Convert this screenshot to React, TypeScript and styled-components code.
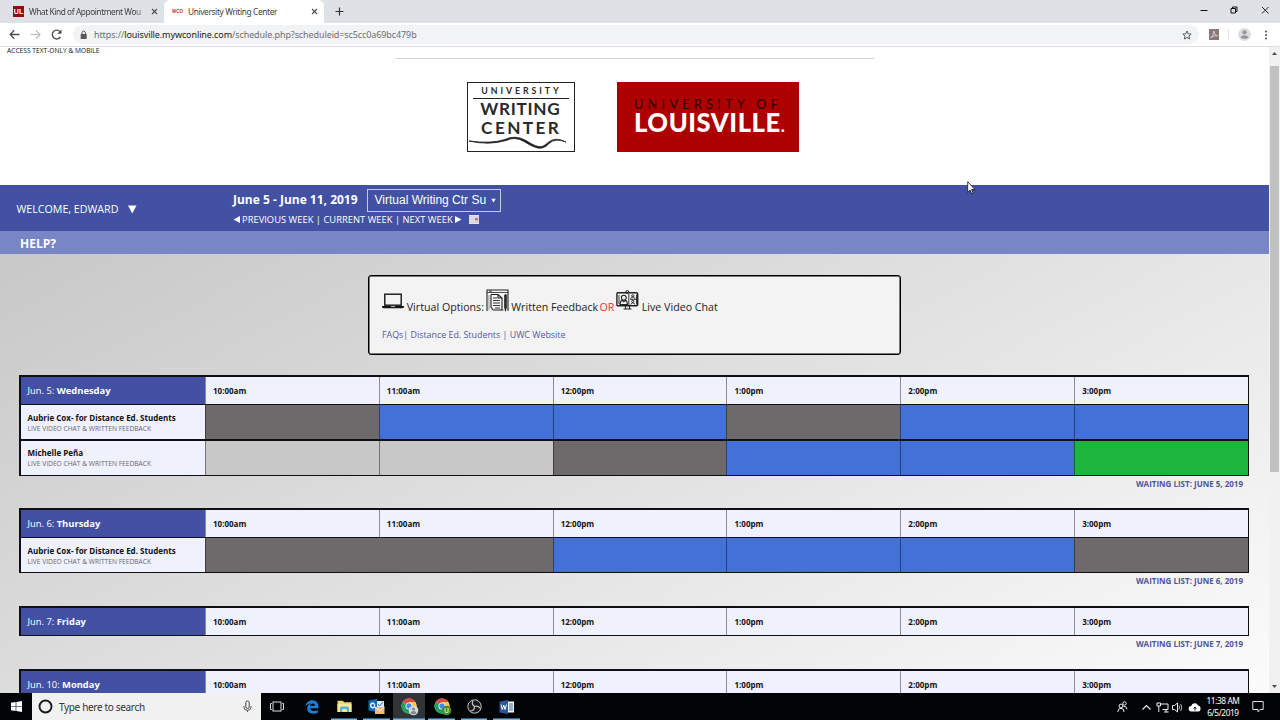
import React from 'react';
import styled, { createGlobalStyle } from 'styled-components';

const Global = createGlobalStyle`
  * { box-sizing: border-box; }
  body { margin: 0; overflow: hidden; font-family: "Open Sans", "Noto Sans", sans-serif; color: #111; }
`;

const Screen = styled.div`
  position: relative;
  width: 1280px;
  height: 720px;
  display: flex;
  flex-direction: column;
  overflow: hidden;
  background: #fff;
`;

/* Browser chrome */
const TabStrip = styled.div`
  height: 23px;
  flex: none;
  display: flex;
  align-items: stretch;
  background: #dee1e6;
`;
const Tab = styled.div<{ $active?: boolean; $width: number }>`
  width: ${p => p.$width}px;
  display: flex;
  align-items: center;
  padding: 0 6px 0 ${p => (p.$active ? 8 : 13)}px;
  background: ${p => (p.$active ? '#fff' : 'transparent')};
  border-radius: 6px 6px 0 0;
  font: 8.3px "Noto Sans", sans-serif;
  color: #3c3f43;
`;
const TabTitle = styled.span<{ $fade?: boolean }>`
  flex: 1;
  overflow: hidden;
  white-space: nowrap;
  letter-spacing: ${p => (p.$fade ? -0.42 : -0.36)}px;
  ${p => p.$fade && 'mask-image: linear-gradient(to right, #000 88%, rgba(0, 0, 0, 0.25) 100%);'}
  margin: 0 ${p => (p.$fade ? 3 : 6)}px 0 5px;
`;
const Favicon = styled.span<{ $plain?: boolean }>`
  width: 11px;
  height: 11px;
  display: grid;
  place-items: center;
  white-space: nowrap;
  background: ${p => (p.$plain ? 'transparent' : '#8c1014')};
  color: ${p => (p.$plain ? '#c8303c' : '#fff')};
  font: bold ${p => (p.$plain ? 4.5 : 7)}px "Liberation Sans", sans-serif;
`;
const NewTab = styled.div`
  display: flex;
  align-items: center;
  padding-left: 11px;
  flex: 1;
`;
const WindowButtons = styled.div`
  display: flex;
  align-items: center;
  gap: 22.5px;
  padding: 0 11.5px 4px 0;
`;
const Toolbar = styled.div`
  height: 24px;
  flex: none;
  display: flex;
  align-items: center;
  padding: 0 9px 0 8px;
  border-bottom: 1.5px solid #dcdde0;
  background: #fff;
`;
const NavButtons = styled.div`
  display: flex;
  gap: 8px;
  width: 65px;
`;
const AddressBar = styled.div`
  width: 1126px;
  height: 19px;
  display: flex;
  align-items: center;
  border-radius: 10px;
  background: #f1f3f4;
  padding: 0 7px 0 6px;
`;
const Url = styled.span`
  flex: 1;
  margin-left: 6px;
  font: 9px "Noto Sans", sans-serif;
  letter-spacing: -0.1px;
  color: #6d7175;
  b { font-weight: 400; color: #1e2022; }
`;
const Extensions = styled.div`
  flex: 1;
  display: flex;
  align-items: center;
  gap: 9px;
  padding-left: 10px;
  svg:last-child { margin-left: 4px; }
`;
const Divider = styled.span`
  width: 1px;
  height: 11px;
  background: #e2e4e6;
`;

/* Page */
const Viewport = styled.div`
  height: 646px;
  flex: none;
  display: flex;
  overflow: hidden;
`;
const Page = styled.main`
  width: 1269px;
  height: 646px;
  overflow: hidden;
  display: flex;
  flex-direction: column;
`;
const Scrollbar = styled.div`
  width: 11px;
  display: flex;
  flex-direction: column;
  align-items: center;
  justify-content: space-between;
  background: #f1f1f1;
  padding: 5px 0;
`;
const Thumb = styled.div`
  width: 9px;
  height: 406px;
  margin: 11px 0 auto;
  background: #c1c1c1;
`;
const Header = styled.header`
  height: 138px;
  flex: none;
  display: flex;
  flex-direction: column;
  align-items: center;
  overflow: hidden;
`;
const AccessLink = styled.div`
  align-self: flex-start;
  height: 11px;
  margin-left: 7px;
  font-size: 6.67px;
  line-height: 7px;
  color: #111;
`;
const Rule = styled.div`
  width: 478px;
  height: 1px;
  flex: none;
  background: #d2d2d2;
`;
const Logos = styled.div`
  display: flex;
  gap: 42px;
  margin: 23px 3px 0 0;
`;
const CenterLogo = styled.div`
  width: 108px;
  height: 70px;
  border: 1.5px solid #222;
  color: #2a2a2a;
  display: flex;
  flex-direction: column;
  align-items: center;
  font-family: Lato, sans-serif;
  white-space: nowrap;
`;
const LogoLine = styled.div<{ $size: number; $spacing: number; $height: number }>`
  font-size: ${p => p.$size}px;
  line-height: ${p => p.$height}px;
  height: ${p => p.$height}px;
  letter-spacing: ${p => p.$spacing}px;
  margin-right: ${p => 2 - p.$spacing}px;
  font-weight: 700;
`;
const LogoRule = styled.div`
  width: 96px;
  height: 1px;
  background: #222;
`;
const SchoolLogo = styled.div`
  width: 182px;
  height: 70px;
  padding: 15px 0 0 17px;
  background: #ad0000;
  color: #fff;
  font-family: Lato, sans-serif;
  white-space: nowrap;
`;
const SchoolTop = styled.div`
  height: 14px;
  font-size: 12.5px;
  line-height: 15px;
  letter-spacing: 4.4px;
  color: #220203;
`;
const SchoolName = styled.div`
  font-size: 25.6px;
  line-height: 23px;
  font-weight: 900;
  letter-spacing: 0.55px;
  span { font-size: 17px; }
`;

const NavBar = styled.nav`
  height: 46px;
  flex: none;
  display: flex;
  background: #4351a5;
  color: #fff;
  white-space: nowrap;
`;
const Welcome = styled.div`
  width: 233px;
  display: flex;
  align-items: center;
  gap: 10px;
  padding: 2px 0 0 16.5px;
  font-size: 10.67px;
`;
const WeekPicker = styled.div`
  display: flex;
  flex-direction: column;
  padding-top: 3px;
`;
const WeekRow = styled.div`
  display: flex;
  align-items: center;
  height: 24px;
  gap: 9px;
`;
const WeekTitle = styled.span`
  font-size: 12px;
  font-weight: 700;
  width: 125px;
  margin-top: -1px;
`;
const Select = styled.div`
  width: 134px;
  height: 23px;
  display: flex;
  align-items: center;
  justify-content: space-between;
  padding: 0 4px 0 6.5px;
  border: 1px solid #c4c9ec;
  font: 12px "Liberation Sans", sans-serif;
`;
const WeekLinks = styled.div`
  display: flex;
  align-items: center;
  height: 15px;
  font-size: 9.33px;
`;
const LinkText = styled.span`
  width: 211px;
  margin: 0 2px 0 2px;
  letter-spacing: 0.03px;
`;
const HelpBar = styled.div`
  height: 23px;
  flex: none;
  padding-left: 20px;
  background: #7886c6;
  color: #fff;
  font-size: 12px;
  line-height: 25px;
  font-weight: 700;
`;
const Body = styled.section`
  flex: 1;
  display: flex;
  flex-direction: column;
  padding: 21px 20px 0 19px;
  background: linear-gradient(152deg, #c8c8c8, #fdfdfd);
`;
const InfoBox = styled.div`
  width: 533px;
  height: 80px;
  flex: none;
  align-self: center;
  margin: 0 0 20px 1px;
  padding: 13px;
  border: 1px solid #000;
  border-radius: 3px;
  box-shadow: inset 0 0 0 0.5px #000;
  background: #f3f3f3;
`;
const Options = styled.div`
  display: flex;
  align-items: flex-end;
  height: 23px;
  font-size: 10.67px;
  line-height: 16px;
  white-space: nowrap;
  svg { flex: none; }
`;
const OptionText = styled.span<{ $width: number; $red?: boolean }>`
  width: ${p => p.$width}px;
  color: ${p => (p.$red ? '#e0352b' : '#1c1c1c')};
  height: 13px;
`;
const Links = styled.div`
  margin-top: 15px;
  font-size: 8.9px;
  line-height: 16px;
  color: #4f5a9f;
`;

const DayGroup = styled.div<{ $height: number }>`
  height: ${p => p.$height}px;
  flex: none;
`;
const Day = styled.div`
  width: 1230px;
  border: solid #101014;
  border-width: 2px 1px 1px 2px;
`;
const Row = styled.div<{ $height: number; $line?: number }>`
  display: grid;
  grid-template-columns: 184px repeat(6, 1fr);
  height: ${p => p.$height}px;
  border-top: ${p => p.$line ?? 0}px solid #101014;
`;
const DayName = styled.div`
  padding-left: 6.5px;
  background: #4351a5;
  color: #fff;
  font-size: 9.4px;
  line-height: 27px;
`;
const fills = { head: '#eff1fd', busy: '#6e696b', open: '#4371d7', off: '#c8c8c8', mine: '#1eb53c' };
type Fill = keyof typeof fills;
const Slot = styled.div<{ $fill: Fill; $joined?: boolean }>`
  padding-left: 7px;
  border-left: 1px solid ${p => (p.$joined ? fills[p.$fill] : 'rgba(0, 0, 0, 0.42)')};
  background: ${p => fills[p.$fill]};
  font-size: 8px;
  line-height: 27px;
  font-weight: 700;
`;
const Tutor = styled.div<{ $top: number }>`
  padding: ${p => p.$top}px 0 0 6.5px;
  background: #eff1fd;
  font-size: 8px;
  line-height: 12px;
  font-weight: 700;
  white-space: nowrap;
`;
const TutorNote = styled.div`
  font-size: 6.67px;
  line-height: 9px;
  font-weight: 400;
  color: #66666e;
`;
const Waiting = styled.div`
  height: 15px;
  text-align: right;
  padding-right: 6px;
  font-size: 8px;
  line-height: 15px;
  font-weight: 700;
  color: #4f549c;
`;

/* Taskbar */
const Taskbar = styled.footer`
  height: 27px;
  flex: none;
  display: flex;
  background: #020406;
  color: #fff;
`;
const TaskCell = styled.div<{ $width?: number; $running?: boolean; $active?: boolean; $inset?: number }>`
  width: ${p => p.$width ?? 33}px;
  padding-left: ${p => p.$inset ?? 0}px;
  display: grid;
  place-items: center;
  background: ${p => (p.$active ? '#303437' : 'transparent')};
  box-shadow: ${p => (p.$running ? 'inset 0 -1.5px #76b9ed' : 'none')};
  margin: ${p => (p.$running && !p.$active ? '0 3px' : '0')};
`;
const SearchBox = styled.div`
  width: 229px;
  display: flex;
  align-items: center;
  gap: 6px;
  padding: 0 9px 0 6px;
  background: #f1f1f1;
  color: #333;
  font: 10px "Noto Sans", sans-serif;
  letter-spacing: -0.33px;
  span { flex: 1; }
`;
const Tray = styled.div`
  margin-left: auto;
  display: flex;
  align-items: center;
  padding-right: 16px;
`;
const Clock = styled.div`
  width: 40px;
  margin: 0 9px 0 0;
  text-align: center;
  font: 8.3px/12px "Noto Sans", sans-serif;
  letter-spacing: -0.4px;
  white-space: nowrap;
`;
const Cursor = styled.svg`
  position: absolute;
  left: 967px;
  top: 181px;
`;

const CloseIcon = () => (
  <svg width="7" height="7" viewBox="0 0 7 7"><path d="M1 1l5 5M6 1L1 6" stroke="#4a4d51" strokeWidth="1.1" /></svg>
);

const Laptop = () => (
  <svg width="22" height="19" viewBox="0 0 22 19">
    <rect x="2.8" y="1.2" width="16.400" height="11" fill="none" stroke="#151515" strokeWidth="1.4" />
    <path d="M0 13h8.500l1 .8h3l1-.8H22v1.200q-.6 1-2 1H2q-1.500 0-2-1z" fill="#151515" />
  </svg>
);
const Papers = () => (
  <svg width="23" height="23" viewBox="0 0 23 23" fill="none" stroke="#222">
    <path d="M1 22V1h21v21" strokeWidth="1.1" />
    <path d="M1 3.5h21M3 2.2h3" strokeWidth=".8" />
    <path d="M3 6v15M14.5 21h4" strokeWidth="1" stroke="#999" />
    <path d="M5 5.5h7l4 3.5v12H7M5 5.5V18l2 3M12 5.5V9h4" strokeWidth="1.1" />
    <path d="M7 9h4M7 11.5h7M7 14h7M7 16.5h7M9 19h5" strokeWidth=".9" />
    <path d="M18.8 6.5v12l.7 2.5.7-2.5v-12z" strokeWidth="1.2" fill="#555" />
    <path d="M18.7 6h1.8" strokeWidth="1.5" />
  </svg>
);
const VideoChat = () => (
  <svg width="23" height="22" viewBox="0 0 23 22" fill="none" stroke="#222">
    <rect x=".9" y="2.8" width="20.8" height="13" rx="1" strokeWidth="1.4" />
    <circle cx="11.3" cy="2" r="1.5" strokeWidth="1" />
    <path d="M12.8 4v11M14 9.3h6.600M3 5v9M20.500 4.500v10" strokeWidth=".9" />
    <circle cx="7.8" cy="7.7" r="2.4" strokeWidth="1.1" />
    <path d="M4 14.5q.2-3.500 2.300-4.200l1.500 1.500 1.500-1.500q2 .7 2.200 4.200z" strokeWidth="1.1" />
    <circle cx="16.8" cy="5.8" r="1.1" strokeWidth=".9" />
    <path d="M14.8 8.8q.3-1.800 2-1.800t2 1.800M14.800 14.600q.3-1.800 2-1.800t2 1.800" strokeWidth=".9" />
    <circle cx="16.8" cy="11.4" r="1.1" strokeWidth=".9" />
    <path d="M9.5 16v2.600M13.500 16v2.600M7.500 19h8" strokeWidth="1.1" />
  </svg>
);

const ChromeIcon = ({ badge }: { badge: 'person' | 'letter' }) => (
  <svg width="20" height="20" viewBox="-1 0 20 20">
    <circle cx="9" cy="9" r="7.5" fill="#e8e8e8" />
    <path d="M9 9L2.5 5.25A7.5 7.5 0 0 1 15.5 5.25H9z" fill="#dd4b3e" />
    <path d="M9 9L2.5 5.25A7.5 7.5 0 0 0 9 16.5l3.2-5.6z" fill="#1da261" />
    <path d="M9 5.25h6.5A7.5 7.5 0 0 1 9 16.5l3.3-5.6z" fill="#fbcc33" />
    <circle cx="9" cy="9" r="3.5" fill="#fff" />
    <circle cx="9" cy="9" r="2.7" fill="#4587f3" />
    <circle cx="13.5" cy="13.5" r="4.8" fill={badge === 'person' ? '#d5d8db' : '#3f8f2e'} />
    {badge === 'person' ? (
      <g fill="#808890"><circle cx="13.5" cy="12" r="1.6" /><path d="M10.5 16.2q.4-2.200 3-2.200t3 2.200q-3 2-6 0z" /></g>
    ) : (
      <text x="13.5" y="16" fontSize="7" textAnchor="middle" fill="#fff" fontFamily="Roboto, sans-serif">U</text>
    )}
  </svg>
);

const TIMES = ['10:00am', '11:00am', '12:00pm', '1:00pm', '2:00pm', '3:00pm'];
type TutorRow = { name: string; slots: Fill[]; joined?: number };
type DayData = { date: string; day: string; tutors: TutorRow[]; waiting?: string; height: number };
const AUBRIE = 'Aubrie Cox- for Distance Ed. Students';
const DAYS: DayData[] = [
  {
    date: 'Jun. 5:', day: 'Wednesday', waiting: 'JUNE 5, 2019', height: 133,
    tutors: [
      { name: AUBRIE, slots: ['busy', 'open', 'open', 'busy', 'open', 'open'] },
      { name: 'Michelle Peña', slots: ['off', 'off', 'busy', 'open', 'open', 'mine'] },
    ],
  },
  {
    date: 'Jun. 6:', day: 'Thursday', waiting: 'JUNE 6, 2019', height: 98,
    tutors: [{ name: AUBRIE, slots: ['busy', 'busy', 'open', 'open', 'open', 'busy'], joined: 1 }],
  },
  { date: 'Jun. 7:', day: 'Friday', waiting: 'JUNE 7, 2019', height: 63, tutors: [] },
  { date: 'Jun. 10:', day: 'Monday', height: 60, tutors: [] },
];

const Schedule = ({ data }: { data: DayData }) => (
  <DayGroup $height={data.height}>
    <Day>
      <Row $height={27}>
        <DayName>{data.date} <b>{data.day}</b></DayName>
        {TIMES.map(t => <Slot key={t} $fill="head">{t}</Slot>)}
      </Row>
      {data.tutors.map((t, i) => (
        <Row key={t.name} $height={i ? 36 : 35} $line={i ? 2 : 1}>
          <Tutor $top={i ? 6 : 7}>{t.name}<TutorNote>LIVE VIDEO CHAT &amp; WRITTEN FEEDBACK</TutorNote></Tutor>
          {t.slots.map((s, n) => <Slot key={n} $fill={s} $joined={n === t.joined} />)}
        </Row>
      ))}
    </Day>
    {data.waiting && <Waiting>WAITING LIST: {data.waiting}</Waiting>}
  </DayGroup>
);

export default function App() {
  return (
    <Screen>
      <Global />
      <TabStrip>
        <Tab $width={164}>
          <Favicon>UL</Favicon>
          <TabTitle $fade>What Kind of Appointment Wou</TabTitle>
          <CloseIcon />
        </Tab>
        <Tab $width={160} $active>
          <Favicon $plain>WCO</Favicon>
          <TabTitle>University Writing Center</TabTitle>
          <CloseIcon />
        </Tab>
        <NewTab>
          <svg width="9" height="9" viewBox="0 0 9 9"><path d="M4.5 .5v8M.5 4.5h8" stroke="#333" strokeWidth="1.2" /></svg>
        </NewTab>
        <WindowButtons>
          <svg width="8" height="8" viewBox="0 0 8 8"><path d="M.5 4.5h7" stroke="#111" /></svg>
          <svg width="8" height="8" viewBox="0 0 8 8"><path d="M1 2.5h4.5v4.5H1zM2.5 2.5V1H7v4.5H5.5" stroke="#111" fill="none" /></svg>
          <svg width="8" height="8" viewBox="0 0 8 8"><path d="M1 1l6.5 6.5M7.5 1L1 7.5" stroke="#222" /></svg>
        </WindowButtons>
      </TabStrip>

      <Toolbar>
        <NavButtons>
          <svg width="13" height="13" viewBox="0 0 13 13"><path d="M11.5 6.5H2.5M6.3 2.3L2.2 6.5l4.1 4.2" stroke="#4c4f53" strokeWidth="1.3" fill="none" /></svg>
          <svg width="13" height="13" viewBox="0 0 13 13"><path d="M1.8 6.5h9M6.9 2.3l4.1 4.2-4.1 4.2" stroke="#b5b7ba" strokeWidth="1.2" fill="none" /></svg>
          <svg width="13" height="13" viewBox="0 0 13 13"><path d="M10.4 9A4.4 4.4 0 1 1 10 3.6" stroke="#4c4f53" strokeWidth="1.4" fill="none" /><path d="M11.5 1.6v4.2H7.3z" fill="#4c4f53" /></svg>
        </NavButtons>
        <AddressBar>
          <svg width="9" height="10" viewBox="0 0 9 10"><rect x="1.7" y="4" width="6" height="5" rx=".6" fill="#55585c" /><path d="M3 4.5V2.8a1.7 1.7 0 0 1 3.4 0v1.7" stroke="#55585c" fill="none" /></svg>
          <Url>https://<b>louisville.mywconline.com</b>/schedule.php?scheduleid=sc5cc0a69bc479b</Url>
          <svg width="10" height="10" viewBox="0 0 24 24"><path d="M12 2.5l2.9 6.6 7.1.7-5.4 4.7 1.6 7-6.2-3.7-6.2 3.7 1.6-7L2 9.8l7.1-.7z" fill="none" stroke="#4c4f53" strokeWidth="2.2" /></svg>
        </AddressBar>
        <Extensions>
          <svg width="10" height="11" viewBox="0 0 10 11"><rect width="10" height="11" fill="#88797a" /><path d="M1.8 8.5Q5 6.5 5 2q.5 4.5 3.5 4.7Q5 6.2 1.8 8.5z" stroke="#e4dcda" strokeWidth=".8" fill="none" /></svg>
          <Divider />
          <svg width="13" height="13" viewBox="0 0 13 13"><circle cx="6.5" cy="6.5" r="6.5" fill="#dcdddf" /><circle cx="6.5" cy="4.3" r="2.1" fill="#94989c" /><path d="M2.5 9.8q.5-2.600 4-2.600t4 2.600q-4 2.200-8 0z" fill="#94989c" /></svg>
          <svg width="4" height="10" viewBox="0 0 4 10" fill="#4c4f53"><circle cx="2" cy="1.5" r="1" /><circle cx="2" cy="5" r="1" /><circle cx="2" cy="8.5" r="1" /></svg>
        </Extensions>
      </Toolbar>

      <Viewport>
        <Page>
          <Header>
            <AccessLink>ACCESS TEXT-ONLY &amp; MOBILE</AccessLink>
            <Rule />
            <Logos>
              <CenterLogo>
                <LogoLine $size={8.8} $spacing={2.9} $height={15}>UNIVERSITY</LogoLine>
                <LogoRule />
                <LogoLine $size={17.2} $spacing={0.7} $height={20}>WRITING</LogoLine>
                <LogoLine $size={17.2} $spacing={2.4} $height={17}>CENTER</LogoLine>
                <svg width="105" height="14" viewBox="0 0 105 14">
                  <path d="M0 5Q22 8 36 3.5Q46-1.5 57 4.5Q68 12 73 10.5C80 8 82-1 97 6Q86 1.5 80 7.5Q75 13 69 12Q64 11 55 5.5Q46 0 37 4.5Q20 9.5 0 5z" fill="#222" stroke="#222" strokeWidth=".9" />
                </svg>
              </CenterLogo>
              <SchoolLogo>
                <SchoolTop>UNIVERSITY OF</SchoolTop>
                <SchoolName>LOUISVILLE<span>.</span></SchoolName>
              </SchoolLogo>
            </Logos>
          </Header>

          <NavBar>
            <Welcome>
              WELCOME, EDWARD
              <svg width="9" height="9" viewBox="0 0 9 9"><path d="M0 .5h8.5L4.25 8.5z" fill="#fff" /></svg>
            </Welcome>
            <WeekPicker>
              <WeekRow>
                <WeekTitle>June 5 - June 11, 2019</WeekTitle>
                <Select>
                  Virtual Writing Ctr Su
                  <svg width="5" height="5" viewBox="0 0 5 5"><path d="M.3 .8h4.4L2.5 4.5z" fill="#fff" /></svg>
                </Select>
              </WeekRow>
              <WeekLinks>
                <svg width="7" height="7" viewBox="0 0 7 7"><path d="M7 0v7L.5 3.5z" fill="#fff" /></svg>
                <LinkText>PREVIOUS WEEK | CURRENT WEEK | NEXT WEEK</LinkText>
                <svg width="7" height="7" viewBox="0 0 7 7"><path d="M0 0v7l6.5-3.5z" fill="#fff" /></svg>
                <svg width="17" height="9" viewBox="0 0 17 9"><rect x="7" width="10" height="9" fill="#e9e6ee" /><path d="M7 2h10M7 4.5h10M7 7h10" stroke="#b4b3c8" strokeWidth=".6" /><rect x="13" y="3" width="3" height="2.5" fill="#c07a70" /></svg>
              </WeekLinks>
            </WeekPicker>
          </NavBar>
          <HelpBar>HELP?</HelpBar>

          <Body>
            <InfoBox>
              <Options>
                <Laptop />
                <OptionText $width={81.5}>&nbsp;Virtual Options:</OptionText>
                <Papers />
                <OptionText $width={91}>&nbsp;Written Feedback</OptionText>
                <OptionText $width={16.5} $red>OR</OptionText>
                <VideoChat />
                <OptionText $width={80}>&nbsp;Live Video Chat</OptionText>
              </Options>
              <Links>FAQs| Distance Ed. Students | UWC Website</Links>
            </InfoBox>
            {DAYS.map(d => <Schedule key={d.date} data={d} />)}
          </Body>
        </Page>
        <Scrollbar>
          <svg width="5" height="3" viewBox="0 0 5 3"><path d="M0 3h5L2.5 0z" fill="#505050" /></svg>
          <Thumb />
          <svg width="5" height="3" viewBox="0 0 5 3"><path d="M0 0h5L2.5 3z" fill="#505050" /></svg>
        </Scrollbar>
      </Viewport>

      <Taskbar>
        <TaskCell $width={32}>
          <svg width="11" height="11" viewBox="0 0 11 11" fill="#fff"><path d="M0 1.7l4.7-.7v4.2H0zM5.3 .9L11 0v5.2H5.3zM0 5.8h4.7V10L0 9.3zM5.3 5.8H11V11l-5.7-.9z" /></svg>
        </TaskCell>
        <SearchBox>
          <svg width="15" height="15" viewBox="0 0 15 15"><circle cx="7.5" cy="7.5" r="6" fill="none" stroke="#1b1b1b" strokeWidth="1.9" /></svg>
          <span>Type here to search</span>
          <svg width="9" height="13" viewBox="0 0 9 13" fill="none" stroke="#444"><rect x="2.8" y="1" width="3.4" height="7.5" rx="1.7" /><path d="M1 6v1.5a3.5 2.8 0 0 0 7 0V6M4.5 10.5V12" strokeWidth=".9" /></svg>
        </SearchBox>
        <TaskCell $width={32}>
          <svg width="14" height="11" viewBox="0 0 14 11" fill="none" stroke="#ddd"><rect x="3" y="1" width="8" height="9" /><path d="M1.8 2.5H.5v6h1.3M12.2 2.5h1.3v6h-1.3" /></svg>
        </TaskCell>
        <TaskCell $width={35} $inset={3}>
          <svg width="14" height="14" viewBox="0 0 14 14"><path d="M.5 6.5C1 2.5 4 .3 7.3 .3c4 0 6.2 3 6.2 6.5v1.5H5c.2 2 1.8 2.7 3.7 2.7 1.5 0 2.9-.4 4-1v2.8c-1.2.6-2.7.9-4.4.9-3.5 0-6.1-2-6.1-5.2 0-2.2 1.2-4 3.2-5C3.3 3.8 1.7 4.7 .5 6.5zM5 5.8h5c0-1.4-.7-2.4-2.3-2.4S5.3 4.5 5 5.8z" fill="#1b7fd6" /></svg>
        </TaskCell>
        <TaskCell $width={26} $running>
          <svg width="15" height="13" viewBox="0 0 15 13"><path d="M.5 .8h5.5l1 1.5h7.5V12H.5z" fill="#f0d66c" /><path d="M.5 4h14v8H.5z" fill="#fbe98f" /><path d="M3 12V8q0-1.5 1.5-1.5h6Q12 6.5 12 8v4h-2.2V9H5.2v3z" fill="#56b2dc" /></svg>
        </TaskCell>
        <TaskCell $width={27} $running>
          <svg width="17" height="17" viewBox="0 0 17 17"><path d="M8 3h8v8H8z" fill="#d9e9f7" /><path d="M10 6l1.5 2L15 4" stroke="#2374bc" fill="none" /><path d="M.5 2.5L9 1v13L.5 12.5z" fill="#0e6cbd" /><ellipse cx="4.7" cy="7.5" rx="1.9" ry="2.4" fill="none" stroke="#fff" strokeWidth="1.3" /><path d="M7 9h9.5v7H7z" fill="#f1ba72" /><path d="M7 9l4.8 4L16.5 9" fill="none" stroke="#fff0d5" /></svg>
        </TaskCell>
        <TaskCell $width={32} $running $active><ChromeIcon badge="person" /></TaskCell>
        <TaskCell $width={27} $running><ChromeIcon badge="letter" /></TaskCell>
        <TaskCell $width={26} $running>
          <svg width="15" height="15" viewBox="0 0 15 15" fill="none" stroke="#c7c7c7"><circle cx="7.5" cy="7.5" r="6.7" fill="#17171a" /><path d="M7.5 7.5Q4 5 6 1.5M7.5 7.5Q11.5 6 13.3 9.5M7.5 7.5Q7.5 12 3 12" strokeWidth="1.2" /></svg>
        </TaskCell>
        <TaskCell $width={27} $running>
          <svg width="16" height="14" viewBox="0 0 16 14"><path d="M8 1.5h7v11H8z" fill="#f3f5fa" /><path d="M10 4h4M10 6h4M10 8h4M10 10h4" stroke="#2b569a" strokeWidth=".9" /><path d="M.5 1.5L9 0v14L.5 12.5z" fill="#2b569a" /><path d="M2 4.5l1.3 5L4.7 5l1.4 4.5 1.4-5" stroke="#fff" fill="none" /></svg>
        </TaskCell>
        <Tray>
          <svg width="86" height="16" viewBox="0 0 86 16" fill="none" stroke="#eee">
            <circle cx="4" cy="7" r="1.9" /><path d="M.8 13q0-3.700 3.200-3.700T7 13" /><circle cx="7.5" cy="4.5" r="1.7" /><path d="M6.5 7.3q3.200-.3 3.500 3" />
            <path d="M25.5 10.5l4-4 4 4" strokeWidth="1.1" />
            <path d="M44 5h7v5.5h-5.5M47 13h4.5M49 10.5V13" /><path d="M40 4h3.5v3H40zM41.8 7v6" />
            <path d="M55.5 6.5h2l3-2.500v9l-3-2.500h-2z" /><path d="M62 6.500q1 2 0 4M63.700 5q2 3.500 0 7" strokeWidth=".8" />
            <path d="M74.5 12.5a2.7 2.7 0 0 1-.3-5.4 3.6 3.6 0 0 1 6.9-.5 3 3 0 0 1 .2 5.9z" fill="#fff" stroke="none" /><path d="M78 11.5V8.5M76.6 9.5L78 8l1.4 1.5" stroke="#111" />
          </svg>
          <Clock>11:38 AM<br />6/5/2019</Clock>
          <svg width="12" height="13" viewBox="0 0 12 13" fill="none" stroke="#ddd"><path d="M.8 1.5h10.4v8H8L6 11.8V9.5H.8z" /></svg>
        </Tray>
      </Taskbar>

      <Cursor width="9" height="14" viewBox="0 0 9 14"><path d="M.7 .7v10.6l2.4-2.2 1.6 3.7 1.5-.6-1.6-3.6H8z" fill="#fff" stroke="#111" strokeWidth=".8" /></Cursor>
    </Screen>
  );
}
